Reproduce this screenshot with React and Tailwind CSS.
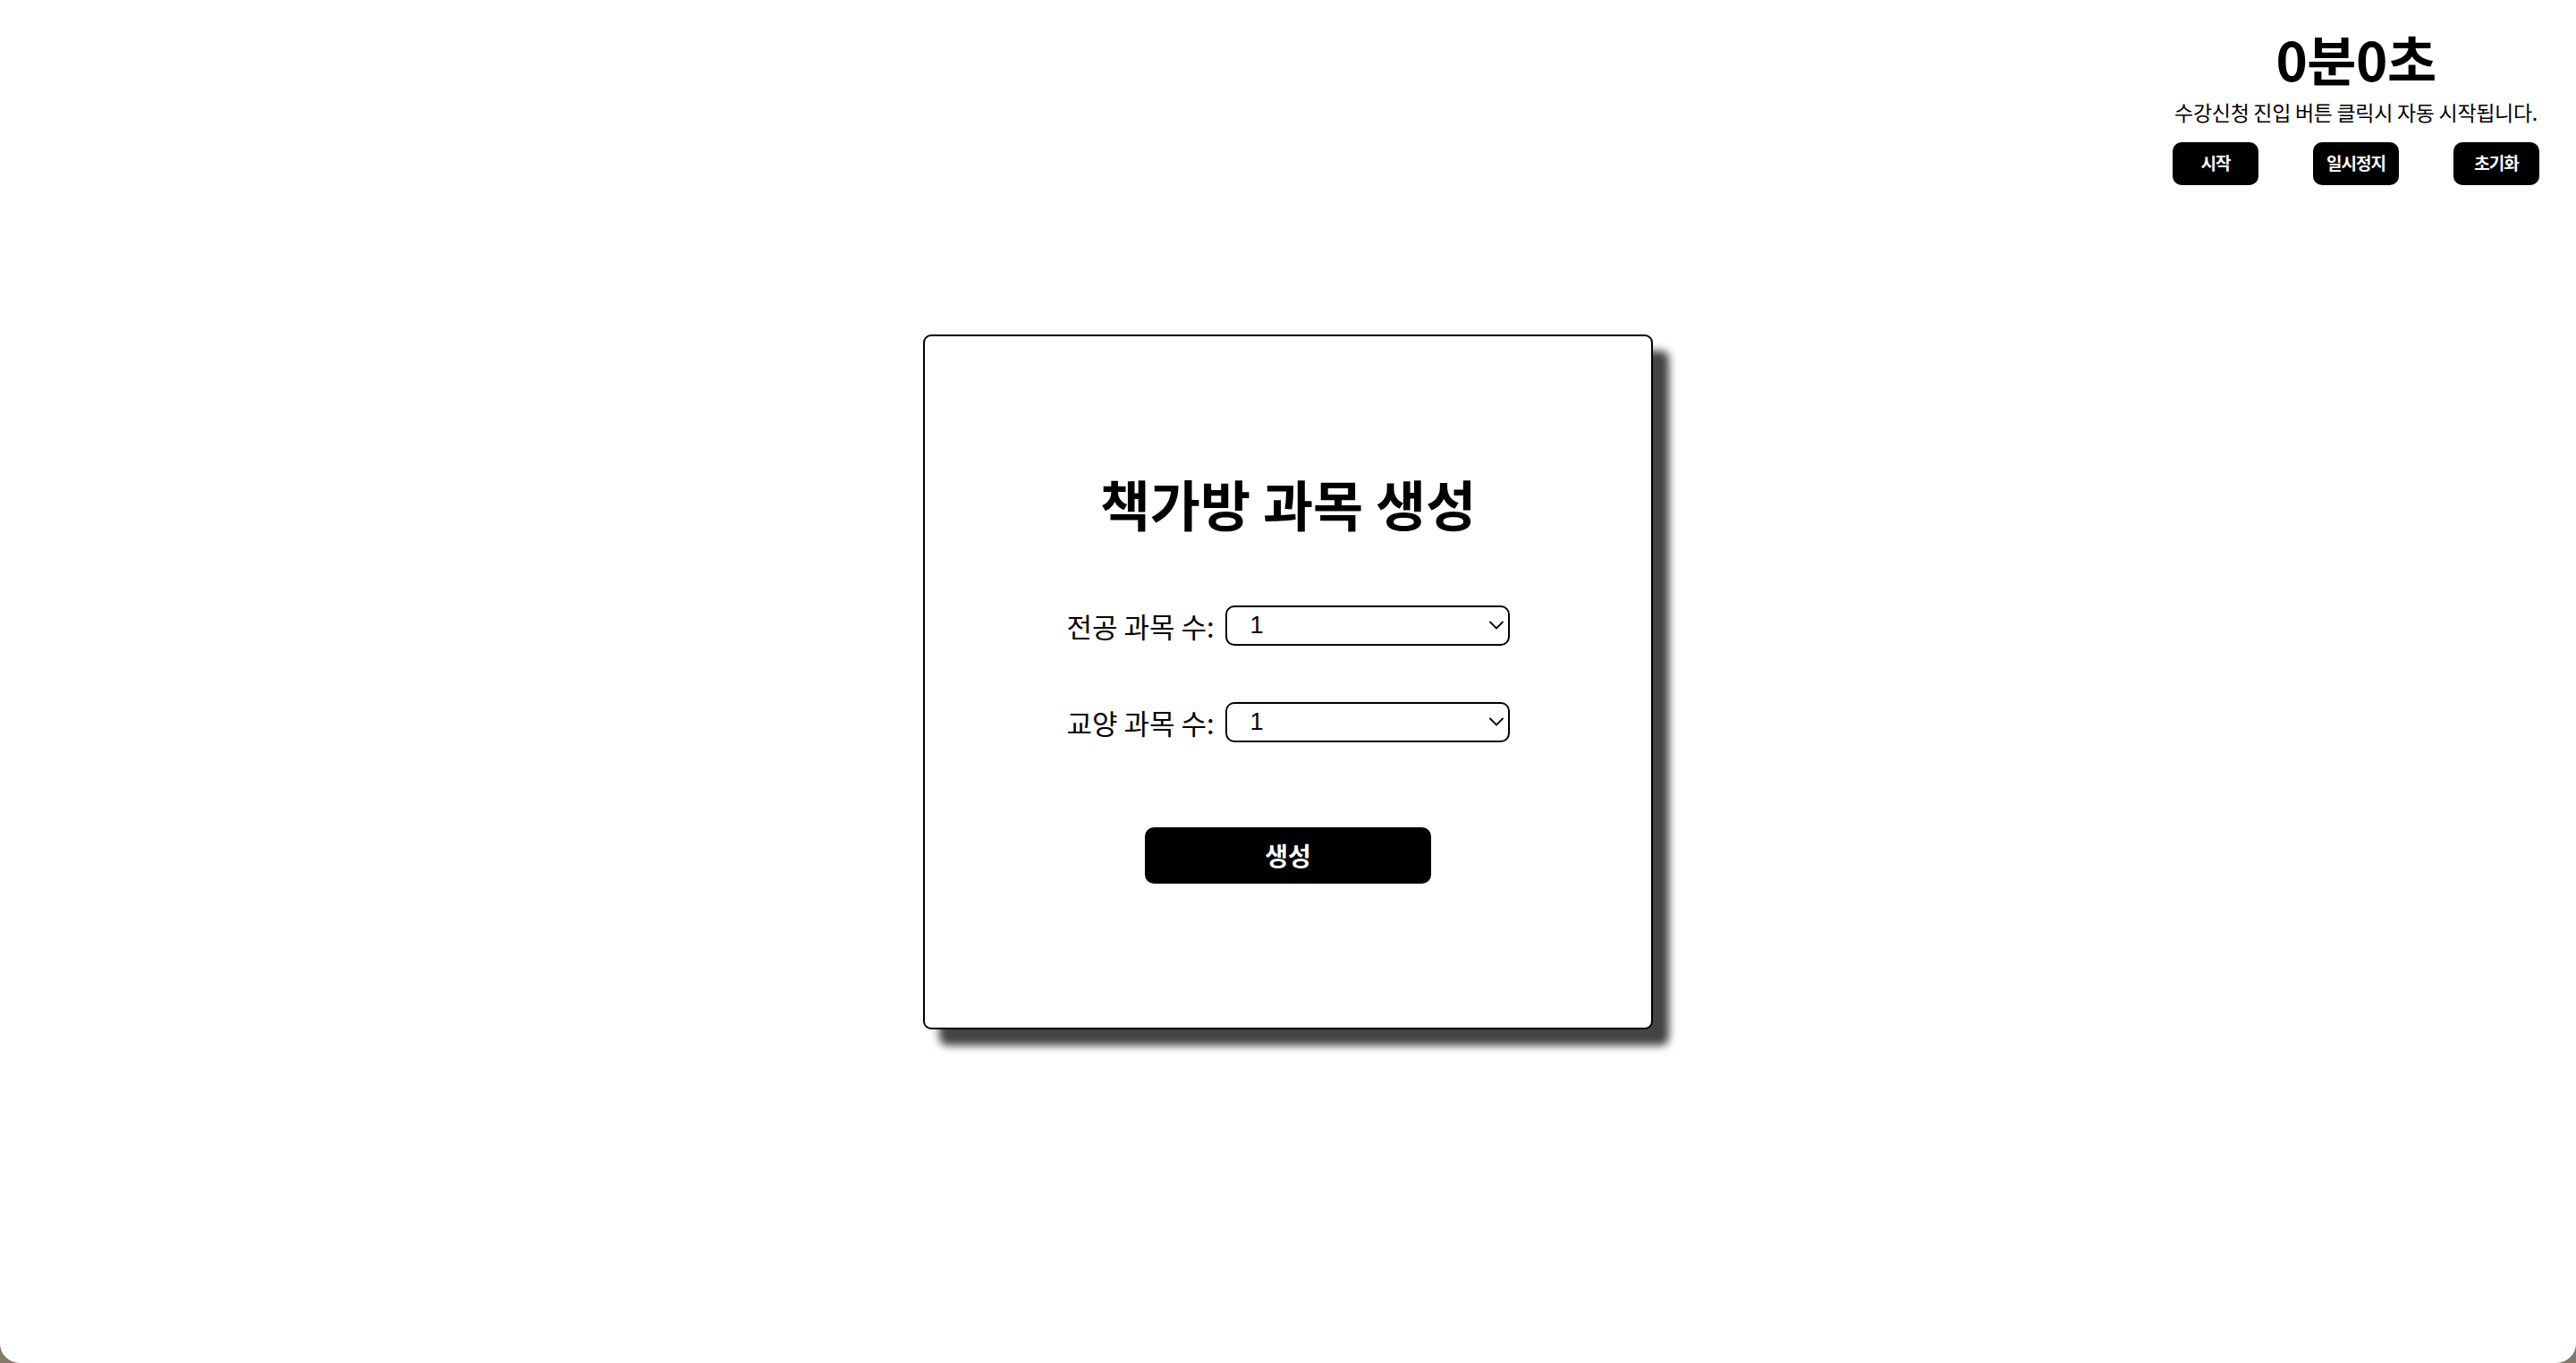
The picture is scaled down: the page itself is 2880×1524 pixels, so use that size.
import React, { useState } from "react";

const KR = { fontFamily: '"Noto Sans CJK KR", "Noto Sans", sans-serif' };

function Chevron() {
  return (
    <svg
      className="pointer-events-none absolute right-[7px] top-1/2 -translate-y-1/2"
      width="16"
      height="10"
      viewBox="0 0 16 10"
      fill="none"
    >
      <path d="M1 1.5 L8 8.5 L15 1.5" stroke="#000" strokeWidth="1.8" strokeLinejoin="round" strokeLinecap="round" />
    </svg>
  );
}

function CountRow({ label, value, onChange, className }) {
  return (
    <div className={"flex items-center gap-[12px] " + className}>
      <span className="text-[31px] leading-none text-black" style={KR}>
        {label}
      </span>
      <div className="relative">
        <select
          value={value}
          onChange={(e) => onChange(e.target.value)}
          className="block h-[45px] w-[318px] appearance-none rounded-[10px] border-2 border-black bg-white pl-[26px] text-[27px] leading-none text-black outline-none"
          style={{ fontFamily: '"Liberation Sans", Arial, sans-serif' }}
        >
          {[1, 2, 3, 4, 5, 6, 7, 8].map((n) => (
            <option key={n} value={n}>
              {n}
            </option>
          ))}
        </select>
        <Chevron />
      </div>
    </div>
  );
}

function TimerButton({ children }) {
  return (
    <button
      className="flex h-[48px] w-[96px] items-center justify-center rounded-[10px] bg-black text-[19px] font-bold tracking-[-1px] text-white"
      style={KR}
    >
      {children}
    </button>
  );
}

export default function App() {
  const [major, setMajor] = useState("1");
  const [general, setGeneral] = useState("1");

  return (
    <div className="h-[1524px] w-full bg-[#857a6a]">
      <div className="relative flex h-full w-full items-center justify-center rounded-b-[22px] bg-white">
        {/* timer panel */}
        <div className="absolute right-[41px] top-[32px] flex w-[410px] flex-col items-center" style={KR}>
          <div className="text-[60px] font-bold leading-[1.1] tracking-[-0.5px] text-black">0분0초</div>
          <div className="mt-[14px] text-[23px] leading-[1.2] tracking-[-0.3px] text-black">
            수강신청 진입 버튼 클릭시 자동 시작됩니다.
          </div>
          <div className="mt-[19px] flex w-full justify-between">
            <TimerButton>시작</TimerButton>
            <TimerButton>일시정지</TimerButton>
            <TimerButton>초기화</TimerButton>
          </div>
        </div>

        {/* subject generator card */}
        <div className="box-border flex h-[777px] w-[816px] flex-col items-center rounded-[9px] border-2 border-black bg-white pt-[156px] shadow-[18px_18px_10px_#444]">
          <h1 className="h-[61px] text-[61px] font-bold leading-none text-black" style={KR}>
            책가방 과목 생성
          </h1>
          <CountRow label="전공 과목 수:" value={major} onChange={setMajor} className="mt-[84px]" />
          <CountRow label="교양 과목 수:" value={general} onChange={setGeneral} className="mt-[63px]" />
          <button
            className="mt-[95px] flex h-[63px] w-[320px] items-center justify-center rounded-[10px] bg-black text-[28px] font-bold text-white"
            style={KR}
          >
            생성
          </button>
        </div>
      </div>
    </div>
  );
}
